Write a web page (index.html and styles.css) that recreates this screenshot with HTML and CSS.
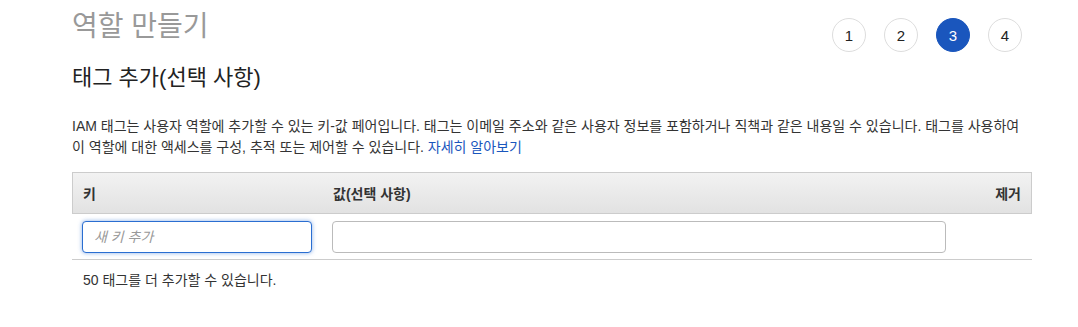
FILE: index.html
```html
<!DOCTYPE html>
<html lang="ko">
<head>
<meta charset="utf-8">
<title>역할 만들기</title>
<link rel="stylesheet" href="styles.css">
</head>
<body>
<div class="page">
  <div class="top">
    <h1 class="title">역할 만들기</h1>
    <ol class="steps">
      <li class="step">1</li>
      <li class="step">2</li>
      <li class="step active">3</li>
      <li class="step">4</li>
    </ol>
  </div>
  <h2 class="subtitle">태그 추가(선택 사항)</h2>
  <p class="desc">IAM 태그는 사용자 역할에 추가할 수 있는 키-값 페어입니다. 태그는 이메일 주소와 같은 사용자 정보를 포함하거나 직책과 같은 내용일 수 있습니다. 태그를 사용하여 이 역할에 대한 액세스를 구성, 추적 또는 제어할 수 있습니다. <a class="link" href="#">자세히 알아보기</a></p>
  <div class="table">
    <div class="thead">
      <div class="th key">키</div>
      <div class="th val">값(선택 사항)</div>
      <div class="th del">제거</div>
    </div>
    <div class="trow">
      <div class="td key"><input class="input focus" type="text" placeholder="새 키 추가"></div>
      <div class="td val"><input class="input" type="text"></div>
      <div class="td del"></div>
    </div>
  </div>
  <p class="footer">50 태그를 더 추가할 수 있습니다.</p>
</div>
</body>
</html>
```
FILE: styles.css
```css
* { box-sizing: border-box; }
body {
  margin: 0;
  background: #fff;
  font-family: "Liberation Sans", "Noto Sans CJK KR", Arial, sans-serif;
  color: #333;
}
.page {
  width: 960px;
  margin-left: 72px;
}
.top {
  display: flex;
  justify-content: space-between;
  align-items: flex-start;
}
.title {
  margin: 0;
  padding-top: 8px;
  font-size: 28px;
  line-height: 38px;
  font-weight: 400;
  color: #999;
}
.steps {
  list-style: none;
  margin: 18px 10px 0 0;
  padding: 0;
  display: flex;
  gap: 18px;
}
.step {
  width: 34px;
  height: 34px;
  border-radius: 50%;
  border: 1px solid #ddd;
  display: flex;
  align-items: center;
  justify-content: center;
  font-size: 15px;
  color: #222;
  background: #fff;
}
.step.active {
  background: #1a56bd;
  border-color: #1a56bd;
  color: #fff;
}
.subtitle {
  margin: 12px 0 0;
  font-size: 22px;
  line-height: 28px;
  font-weight: 400;
  color: #222;
}
.desc {
  margin: 24px 0 0;
  font-size: 14px;
  line-height: 21px;
  color: #333;
}
.link {
  color: #1a56bd;
  text-decoration: none;
}
.table {
  margin-top: 14px;
  border-bottom: 1px solid #ccc;
}
.thead {
  display: flex;
  height: 42px;
  align-items: center;
  border: 1px solid #ccc;
  background: linear-gradient(#f2f2f2, #e2e2e2);
  font-size: 14px;
  font-weight: 700;
  color: #333;
}
.key { width: 250px; padding-left: 10px; }
.val { flex: 1; padding-left: 10px; }
.del { width: 86px; text-align: right; padding-right: 10px; }
.trow {
  display: flex;
  padding: 7px 0 6px;
}
.td.key { padding-left: 10px; padding-right: 10px; }
.td.val { padding-left: 10px; }
.input {
  display: block;
  width: 100%;
  height: 32px;
  border: 1px solid #bbb;
  border-radius: 4px;
  padding: 0 11px;
  font-family: inherit;
  font-size: 14px;
  color: #333;
  background: #fff;
  outline: none;
}
.input.focus {
  border-color: #2a6ed1;
  box-shadow: 0 0 4px rgba(42, 110, 209, 0.55);
}
.input::placeholder {
  color: #999;
  font-style: italic;
}
.footer {
  margin: 10px 0 0 11px;
  font-size: 14px;
  line-height: 20px;
  color: #333;
}
```
